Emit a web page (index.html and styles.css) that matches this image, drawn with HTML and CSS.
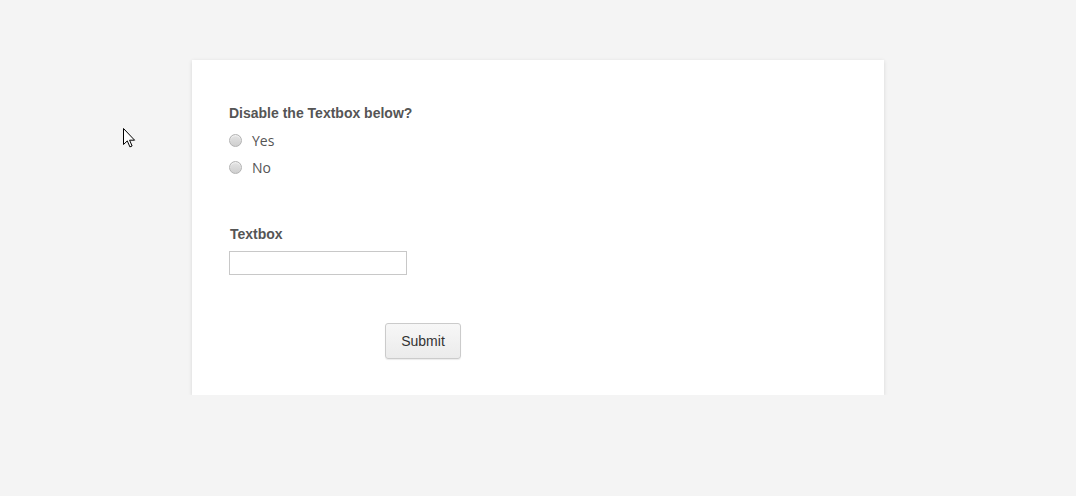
FILE: index.html
```html
<!DOCTYPE html>
<html>
<head>
<meta charset="utf-8">
<link rel="stylesheet" href="styles.css">
</head>
<body>
<div class="page">
  <form class="card">
    <div class="field-label">Disable the Textbox below?</div>
    <div class="radios">
      <label class="radio-row"><span class="radio"></span><span class="radio-text">Yes</span></label>
      <label class="radio-row"><span class="radio"></span><span class="radio-text">No</span></label>
    </div>
    <div class="field-label second">Textbox</div>
    <div class="textbox"></div>
    <div class="actions">
      <button type="button" class="submit">Submit</button>
    </div>
  </form>
</div>
<svg class="cursor" width="14" height="22" viewBox="0 0 14 22">
  <path d="M0.5 0.5 L0.5 16.5 L4.3 12.9 L6.9 18.9 L9.1 18 L6.6 12.2 L11.6 12.2 Z" fill="#fff" stroke="#000" stroke-width="1" stroke-linejoin="miter"/>
</svg>
</body>
</html>
```

FILE: styles.css
```css
html, body {
  margin: 0;
  padding: 0;
  background: #f4f4f4;
  font-family: "Liberation Sans", Arial, sans-serif;
}
.page {
  padding-top: 60px;
  padding-left: 192px;
}
.card {
  width: 692px;
  box-sizing: border-box;
  background: #fff;
  padding: 45px 37px 36px 37px;
  box-shadow: 0 1px 4px rgba(0,0,0,0.12);
  display: flex;
  flex-direction: column;
  align-items: flex-start;
}
.field-label {
  font-size: 14px;
  line-height: 16px;
  font-weight: bold;
  color: #555;
}
.field-label.second {
  margin-top: 45px;
  padding-left: 1px;
}
.radios {
  margin-top: 6px;
  display: flex;
  flex-direction: column;
}
.radio-row {
  display: flex;
  align-items: center;
  height: 27px;
}
.radio {
  width: 11px;
  height: 11px;
  border-radius: 50%;
  border: 1px solid #b3b3b3;
  background: linear-gradient(#e4e4e4, #cfcfcf);
  box-shadow: inset 0 1px 1px rgba(255,255,255,0.6);
}
.radio-text {
  margin-left: 10px;
  font-family: "Open Sans", sans-serif;
  font-size: 14px;
  color: #555;
}
.textbox {
  margin-top: 9px;
  width: 178px;
  height: 24px;
  box-sizing: border-box;
  border: 1px solid #c8c8c8;
  background: #fff;
}
.actions {
  margin-top: 48px;
  padding-left: 156px;
}
.submit {
  width: 76px;
  height: 36px;
  box-sizing: border-box;
  border: 1px solid #cbcbcb;
  border-radius: 3px;
  background: linear-gradient(#f7f7f7, #ebebeb);
  box-shadow: 0 1px 1px rgba(0,0,0,0.08);
  font-family: "Liberation Sans", Arial, sans-serif;
  font-size: 14px;
  color: #333;
  padding: 0;
}
.cursor {
  position: absolute;
  left: 123px;
  top: 128px;
}
```
